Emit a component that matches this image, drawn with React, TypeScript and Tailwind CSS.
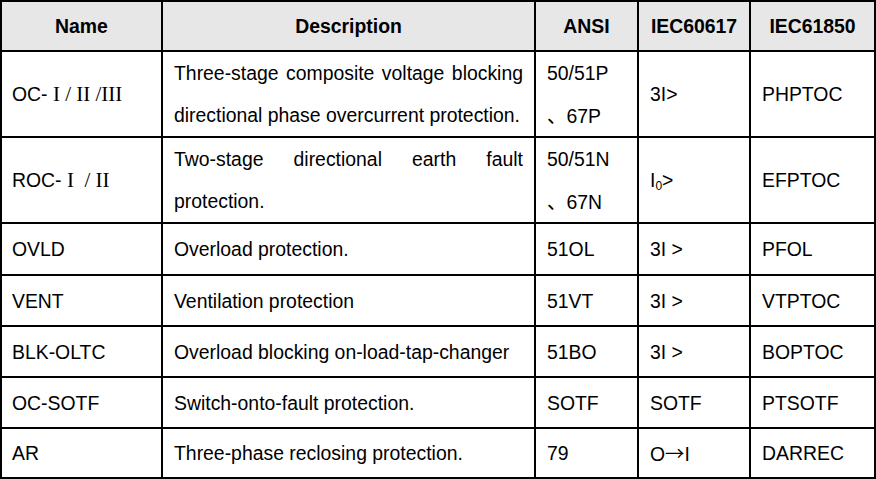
import React from 'react';

type Row = {
  name: React.ReactNode;
  desc: string;
  ansi: React.ReactNode;
  iec617: React.ReactNode;
  iec850: string;
};

const serif = "font-['Liberation_Serif',serif] text-[21px]";
const cjk = "font-['Noto_Sans_CJK_SC',sans-serif]";

const rows: Row[] = [
  {
    name: (
      <>
        OC- <span className={`${serif} whitespace-pre`}>I / II /III</span>
      </>
    ),
    desc: 'Three-stage composite voltage blocking directional phase overcurrent protection.',
    ansi: (
      <>
        50/51P
        <br />
        <span className={cjk}>、</span>67P
      </>
    ),
    iec617: '3I>',
    iec850: 'PHPTOC',
  },
  {
    name: (
      <>
        ROC- <span className={`${serif} whitespace-pre`}>I  / II</span>
      </>
    ),
    desc: 'Two-stage directional earth fault protection.',
    ansi: (
      <>
        50/51N
        <br />
        <span className={cjk}>、</span>67N
      </>
    ),
    iec617: (
      <>
        I<sub className="text-[12px]">0</sub>&gt;
      </>
    ),
    iec850: 'EFPTOC',
  },
  { name: 'OVLD', desc: 'Overload protection.', ansi: '51OL', iec617: '3I >', iec850: 'PFOL' },
  { name: 'VENT', desc: 'Ventilation protection', ansi: '51VT', iec617: '3I >', iec850: 'VTPTOC' },
  { name: 'BLK-OLTC', desc: 'Overload blocking on-load-tap-changer', ansi: '51BO', iec617: '3I >', iec850: 'BOPTOC' },
  { name: 'OC-SOTF', desc: 'Switch-onto-fault protection.', ansi: 'SOTF', iec617: 'SOTF', iec850: 'PTSOTF' },
  {
    name: 'AR',
    desc: 'Three-phase reclosing protection.',
    ansi: '79',
    iec617: (
      <>
        O<span className={cjk}>→</span>I
      </>
    ),
    iec850: 'DARREC',
  },
];

const headers = ['Name', 'Description', 'ANSI', 'IEC60617', 'IEC61850'];

const App: React.FC = () => {
  return (
    <div className="w-[876px] h-[479px] bg-white font-['Liberation_Sans',Arial,sans-serif] text-[19.4px] text-black leading-[42px]">
      <div className="grid grid-cols-[159px_371px_101px_110px_123px] grid-rows-[48px_84px_84px_50px_49px_49px_49px_48px] gap-[2px] p-[2px] bg-black">
        {headers.map((h) => (
          <div key={h} className="bg-[#e7e7e7] flex items-center justify-center font-bold">
            {h}
          </div>
        ))}
        {rows.map((r, i) => (
          <React.Fragment key={i}>
            <div className="bg-white flex items-center pl-[10px] pr-[8px]">
              <span>{r.name}</span>
            </div>
            <div className="bg-white flex items-center px-[11px]">
              <p className="text-justify">{r.desc}</p>
            </div>
            <div className="bg-white flex items-center px-[11px]">
              <span>{r.ansi}</span>
            </div>
            <div className="bg-white flex items-center px-[11px]">
              <span>{r.iec617}</span>
            </div>
            <div className="bg-white flex items-center px-[11px]">
              <span>{r.iec850}</span>
            </div>
          </React.Fragment>
        ))}
      </div>
    </div>
  );
};

export default App;
